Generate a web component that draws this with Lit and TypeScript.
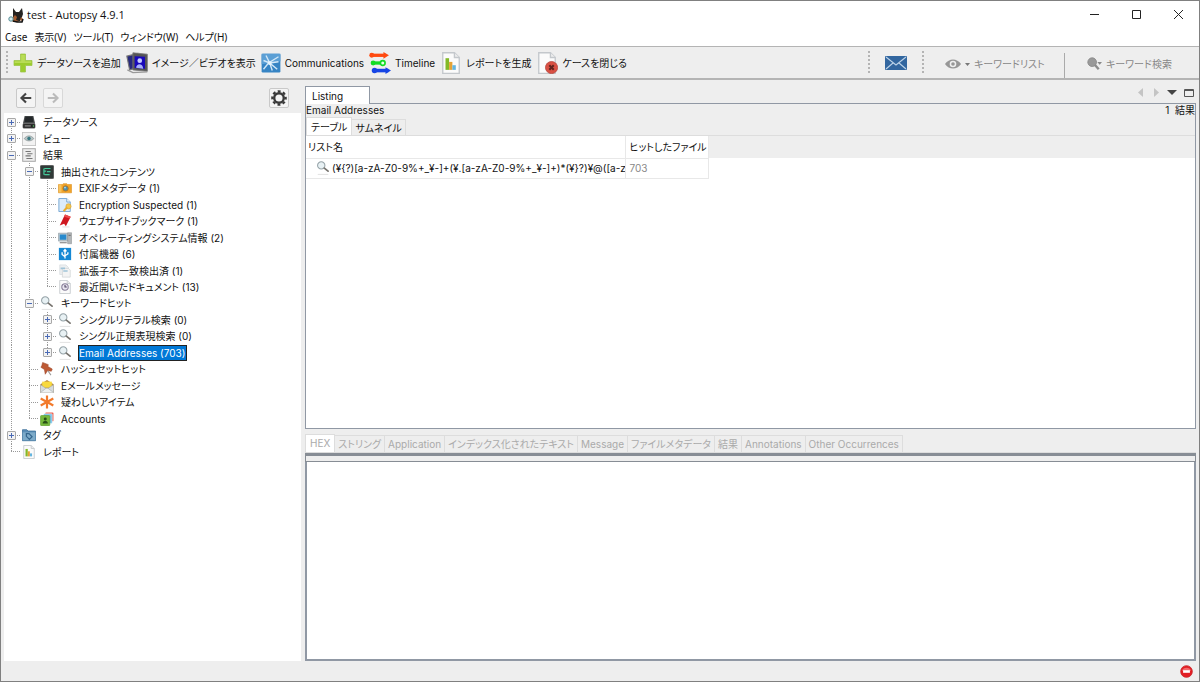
import { LitElement, html, svg, css, nothing } from "lit";
import { customElement, state } from "lit/decorators.js";
import { classMap } from "lit/directives/class-map.js";

const doc = svg`<path d="M2 .5h8.500l3.500 3.500v11.500h-12z" fill="#fbfbfb" stroke="#c4c8cc"/><path d="M10.500 .5v3.500h3.500" fill="#eee" stroke="#c4c8cc"/>`;

const lens = svg`<circle cx="6" cy="5" r="4.200" fill="#e8f1f4" stroke="#96a3a8" stroke-width="1.200"/><path d="M9.500 8.200l4.300 3.400" stroke="#77746f" stroke-width="2" stroke-linecap="round"/><path d="M2 15.300h12" stroke="#ddd"/>`;

const icons: Record<string, unknown> = {
  dog: svg`<path d="M5 1l3 4h3l3-4 1 6-1 3-2 4H7L5 10z" fill="#252321"/><path d="M7 8l2 2-1 3 3 1-1 1H5l-2-2zM13 10l2 2-1 2-2-1z" fill="#a65d31"/><circle cx="3" cy="12" r="2.2" fill="#d7ecee" stroke="#528b95"/><path d="M5 14l4 1h5l1-3" stroke="#111" stroke-width="1.5" fill="none"/>`,
  plus: svg`<path d="M6 .8h4V6h5.2v4H10v5.2H6V10H.8V6H6z" fill="#9ccc2d" stroke="#9cc44a" stroke-width=".6"/><path d="M6.5 1.3h3v5.2h5.2v1.5H1.3V6.5h5.2z" fill="#b9dc56"/>`,
  images: svg`<path d="M.6 3l8-2 1 10-7 2z" fill="#27297c" stroke="#777" stroke-width=".8"/><path d="M5 .6l10.500 1v12.400l-10.500-1z" fill="#555" stroke="#777" stroke-width=".6"/><path d="M6.300 3l7.500.5v8.700l-7.500-.5z" fill="#1808bb"/><circle cx="10" cy="6.3" r="1.7" fill="#c6cbff"/><path d="M7.3 11.500c.3-3.500 5-3.500 5.200.6z" fill="#a8b1fa"/><path d="M1 13l4 2 10.500-.5" stroke="#999" fill="none"/>`,
  comms: svg`<rect x=".5" y=".5" width="15" height="15" rx="1" fill="#3684c4"/><path d="M.5.5h15v6L.5 9z" fill="#5b9fd5"/><path d="M2 13l4-5 8-5M4 2l3 6 6 5M2 6l5 2 7-1M7 8l2 6" stroke="#d3e8f8" stroke-width="1.1" fill="none"/><circle cx="7" cy="8" r="1.5" fill="#e6f3fc"/>`,
  timeline: svg`<path d="M2 2.4h10" stroke-width="2.400" stroke="#ff4a10"/><circle cx="2" cy="2.4" r="1.8" fill="#ff4a10"/><path d="M10.500 0l4 2.400-4 2.500z" fill="#ff4a10"/><path d="M3 8h8" stroke="#14dc24" stroke-width="2.4"/><circle cx="3" cy="8" r="1.8" fill="#14dc24"/><circle cx="10" cy="8" r="1.7" fill="#eaffea" stroke="#14dc24" stroke-width="1.2"/><path d="M3 13.5h11" stroke="#1745e5" stroke-width="2.6"/><circle cx="4" cy="13.5" r="2" fill="#1745e5"/><path d="M12 11l4 2.5-4 2.5z" fill="#1745e5"/>`,
  report: svg`${doc}<path d="M4 4.5h2.6V13H4z" fill="#83b928"/><path d="M6.6 7.2H9V13H6.6z" fill="#e5a336"/><path d="M9 9.6h2.5V13H9z" fill="#64b5df"/>`,
  close: svg`${doc}<circle cx="11.3" cy="11.3" r="4.4" fill="#d95043" stroke="#b9483f" stroke-width=".6"/><path d="M9.7 9.7l3.2 3.2m0-3.2l-3.2 3.2" stroke="#61221d" stroke-width="1.5"/>`,
  mail: svg`<rect width="22" height="14" rx="1" fill="#32669f"/><path d="M1 1l10 8L21 1M1 13l7-6M21 13l-7-6" fill="none" stroke="#bdd3e8" stroke-width="1.1"/>`,
  eye: svg`<path d="M0 5C4-1 12-1 16 5 12 11 4 11 0 5z" fill="#969696"/><circle cx="8" cy="5" r="3.3" fill="#eee"/><circle cx="8" cy="5" r="1.8" fill="#969696"/>`,
  search: svg`<circle cx="5.5" cy="5.5" r="4.6" fill="#999" stroke="#8c8c8c"/><path d="M8.5 8.5l4 4.5" stroke="#8c8c8c" stroke-width="2.6"/><path d="M11 5.2h5l-2.500 3z" fill="#888"/>`,
  back: svg`<path d="M14 8H3M8 2.8L2.8 8 8 13.2" fill="none" stroke="currentColor" stroke-width="2.400"/>`,
  forward: svg`<path d="M2 8h11M8 2.8L13.2 8 8 13.2" fill="none" stroke="currentColor" stroke-width="2.400"/>`,
  gear: svg`<circle cx="8" cy="8" r="4.8" fill="none" stroke="#3a3a3a" stroke-width="2.4"/><circle cx="8" cy="8" r="6.7" fill="none" stroke="#3a3a3a" stroke-width="2.2" stroke-dasharray="2.9 2.36" stroke-dashoffset="1.45"/>`,
  disk: svg`<path d="M3 1h10l2 9H1z" fill="#46494a"/><path d="M4 2h8l1 6H3z" fill="#24282a"/><rect x="1" y="10" width="14" height="5" rx="1" fill="#222" stroke="#777" stroke-width=".6"/><path d="M3 12.5h7" stroke="#bbb"/><circle cx="13" cy="12.5" r=".8" fill="#5fd96a"/>`,
  view: svg`<rect x=".5" y=".5" width="15" height="15" fill="#f2f2f2" stroke="#c4c4c4"/><path d="M2.5 7.5c3-4 8-4 11 0-3 3.5-8 3.5-11 0z" fill="#b8c4c5" stroke="#7c8a8b" stroke-width=".8"/><circle cx="8" cy="7.3" r="2" fill="#397a83"/>`,
  results: svg`<rect x=".8" y=".8" width="14.4" height="14.4" fill="#eee" stroke="#aaa" stroke-width="1.2"/><path d="M4 4h6M6 6.500h6M4 9h6M5 12h7" stroke="#777" stroke-width="1.200"/>`,
  extracted: svg`<rect x=".5" y=".5" width="15" height="15" rx="1" fill="#303a38" stroke="#555"/><path d="M5 4h7M4 7h3M8 7.5h4M5 11h6M4.5 4v7" stroke="#45c99a" stroke-width="1.4"/>`,
  camera: svg`<path d="M.5 4h4.500l1-1h4l1 1h4.500v9.500H.5z" fill="#f1a329" stroke="#d98b17" stroke-width=".6"/><path d="M1 4h3v9H1z" fill="#f6c35e"/><circle cx="8.7" cy="8.500" r="3" fill="#4d8eae" stroke="#b97416"/><circle cx="8" cy="7.5" r="1" fill="#bae1ec"/>`,
  encrypt: svg`<path d="M1 .6h9l4 4v10.900H1z" fill="#dcecfb" stroke="#6da0d0"/><path d="M10 .6v4h4" fill="#f6fbff" stroke="#6da0d0"/><circle cx="12" cy="9.500" r="3" fill="#f5c84d" stroke="#cf982a" stroke-width=".6"/><path d="M10.500 10.500L6.500 15" stroke="#e8ad30" stroke-width="2.400"/>`,
  bookmark: svg`<path d="M8 .5l6.500 2.500-5.500 11-2-3-5 2z" fill="#cf1720"/><path d="M8 .5l6.500 2.500-1 2-6.500-2z" fill="#ee4c4c"/><path d="M5 14.8h8" stroke="#ddd"/>`,
  computer: svg`<path d="M.5 2.500h10.500v9H.5z" fill="#bfc9cf" stroke="#8a989f" stroke-width=".7"/><path d="M2 4h7.500v6H2z" fill="#288acd"/><path d="M11 2h4.500v12.500H11z" fill="#b2b6b8" stroke="#868b8e" stroke-width=".6"/><path d="M2 13.500h8M12 5h2.500" stroke="#777" stroke-width="1.200"/>`,
  usb: svg`<rect x="1" y="1" width="14" height="14" fill="#1588d4"/><path d="M8 13V3M6.3 5L8 3l1.7 2M8 11L4.7 8.5V6M8 10l3.3-2V6" stroke="#fff" stroke-width="1.5" fill="none"/>`,
  mismatch: svg`<path d="M2 1h7l3 3v8H2z" fill="#eceff1" stroke="#d1d6d9" stroke-width=".7"/><path d="M5 5h7l2 2v8H5z" fill="#f4f4f4" stroke="#c8cdd0" stroke-width=".7"/><path d="M3 5h5M6 8h5" stroke="#9fc3d8" stroke-width="1.800"/>`,
  recent: svg`${doc}<circle cx="8" cy="8" r="3.7" fill="#e7e4ee" stroke="#8a819b" stroke-width="1.2"/><path d="M8 5.8V8h2" stroke="#4b4060" fill="none" stroke-width="1.2"/>`,
  lens,
  pin: svg`<path d="M3 .5l6.500 2.500-.5 2L14 8l-1 2.500-4.500-.5-2.500 4L5 8.500 1 6l1-1.600z" fill="#bd5a35" stroke="#9b4426" stroke-width=".6"/><path d="M9 10l3.500 5" stroke="#999" stroke-width="1.200"/>`,
  envelope: svg`<path d="M.5 6l7.500-5 7.500 5v9.500H.5z" fill="#b98b42"/><path d="M2.500 3h11v7h-11z" fill="#f8d93e"/><path d="M.5 6.500l7.500 5 7.500-5v9H.5z" fill="#d7dbdd" stroke="#9da3a5" stroke-width=".6"/><path d="M.5 15.500l6.500-5h2l6.500 5" fill="#edf0f0" stroke="#9da3a5" stroke-width=".6"/>`,
  asterisk: svg`<path d="M8 .5v15M.8 4l14.400 8M15.200 4L.8 12" stroke="#f27a2c" stroke-width="2.500"/>`,
  accounts: svg`<rect x="6" y=".6" width="9.4" height="10" rx="1" fill="#ee6352"/><rect x="4" y="2" width="10" height="11" rx="1" fill="#7bc5ee" stroke="#fff" stroke-width=".5"/><rect x=".6" y="4" width="10.6" height="11.6" rx="1" fill="#75b83c" stroke="#5c9b2b" stroke-width=".7"/><circle cx="6" cy="8" r="1.7" fill="#294f17"/><path d="M3 13c.2-4 5.8-4 6 0z" fill="#294f17"/>`,
  tag: svg`<path d="M.5 14.500V2h5l1.500 1.500h8.500v11z" fill="#5a8db5" stroke="#40739b"/><path d="M.8 5h14.400v9H.8z" fill="#7dabc9"/><path d="M5 6.500h3l3.500 3.500-3 3L5 9.500z" fill="none" stroke="#35678e" stroke-width="1.400"/>`,
  stop: svg`<circle cx="8" cy="8" r="7.2" fill="#e31e24" stroke="#c9272b"/><path d="M2.4 7a5.8 5 0 0 1 11.2 0z" fill="#f2686a"/><path d="M3.8 6.4h8.4v3.2H3.8z" fill="#fff"/>`,
};

const icon = (name: string, w = 16, h = 16, box = "0 0 16 16") =>
  html`<svg width=${w} height=${h} viewBox=${box} aria-hidden="true">${icons[name]}</svg>`;

/** guides: "|" passes through, "+" branches, "L" ends. */
interface Node { guides: string; icon: string; text: string; toggle?: "open" | "closed"; }

const nodes: Node[] = [
  { guides: "+", icon: "disk", text: "データソース", toggle: "closed" },
  { guides: "+", icon: "view", text: "ビュー", toggle: "closed" },
  { guides: "+", icon: "results", text: "結果", toggle: "open" },
  { guides: "|+", icon: "extracted", text: "抽出されたコンテンツ", toggle: "open" },
  { guides: "||+", icon: "camera", text: "EXIFメタデータ (1)" },
  { guides: "||+", icon: "encrypt", text: "Encryption Suspected (1)" },
  { guides: "||+", icon: "bookmark", text: "ウェブサイトブックマーク (1)" },
  { guides: "||+", icon: "computer", text: "オペレーティングシステム情報 (2)" },
  { guides: "||+", icon: "usb", text: "付属機器 (6)" },
  { guides: "||+", icon: "mismatch", text: "拡張子不一致検出済 (1)" },
  { guides: "||L", icon: "recent", text: "最近開いたドキュメント (13)" },
  { guides: "|+", icon: "lens", text: "キーワードヒット", toggle: "open" },
  { guides: "||+", icon: "lens", text: "シングルリテラル検索 (0)", toggle: "closed" },
  { guides: "||+", icon: "lens", text: "シングル正規表現検索 (0)", toggle: "closed" },
  { guides: "||L", icon: "lens", text: "Email Addresses (703)", toggle: "closed" },
  { guides: "|+", icon: "pin", text: "ハッシュセットヒット" },
  { guides: "|+", icon: "envelope", text: "Eメールメッセージ" },
  { guides: "|+", icon: "asterisk", text: "疑わしいアイテム" },
  { guides: "|L", icon: "accounts", text: "Accounts" },
  { guides: "+", icon: "tag", text: "タグ", toggle: "closed" },
  { guides: "L", icon: "report", text: "レポート" },
];

const base = css`
  * { box-sizing: border-box; }
  button { font: inherit; color: inherit; background: none; border: 0; margin: 0; padding: 0; white-space: nowrap; font-feature-settings: inherit; }
  svg { display: block; flex: none; }
`;

@customElement("result-tree")
class ResultTree extends LitElement {
  @state() selected = "Email Addresses (703)";
  static styles = [base, css`
    :host { display: block; background: #fff; overflow: hidden; padding-top: 1px; }
    .tree { display: grid; grid-auto-rows: 1fr; height: 346px; margin: 0; padding: 0; list-style: none; }
    .row { display: flex; align-items: center; min-height: 0; }
    .guide { width: 18px; flex: none; align-self: stretch; display: flex; align-items: center; padding-left: 3px;
      --v: repeating-linear-gradient(#999 0 1px, transparent 1px 2px);
      --h: repeating-linear-gradient(90deg, #999 0 1px, transparent 1px 2px); background-repeat: no-repeat; }
    .pass { background-image: var(--v); background-size: 1px 100%; background-position: 7px 0; }
    .branch { background-image: var(--v), var(--h); background-size: 1px 100%, 10px 1px; background-position: 7px 0, 7px 50%; }
    .row:first-child .branch { background-size: 1px 50%, 10px 1px; background-position: 7px 100%, 7px 50%; }
    .end { background-image: var(--v), var(--h); background-size: 1px 50%, 10px 1px; background-position: 7px 0, 7px 50%; }
    .toggle { width: 9px; height: 9px; border: 1px solid #a8a8a8; border-radius: 1px; display: grid; place-items: center;
      background: linear-gradient(#4a6ab5, #4a6ab5) center / 5px 1px no-repeat, #f3f3f3; }
    .closed { background: linear-gradient(#4a6ab5, #4a6ab5) center / 5px 1px no-repeat, linear-gradient(#4a6ab5, #4a6ab5) center / 1px 5px no-repeat, #f3f3f3; }
    .icon { width: 14px; margin-right: 6px; flex: none; }
    .name { padding: 0 1px; height: 16px; line-height: 16px; }
    .on { background: #0078d7; color: #fff; outline: 1px solid #222; outline-offset: -1px; padding-right: 2px; }
  `];
  render() {
    return html`<ul class="tree" role="tree" aria-label="結果">${nodes.map((n) => html`
      <li class="row" role="treeitem" aria-selected=${n.text === this.selected}>
        ${[...n.guides].map((g, i) => html`<span class="guide ${g === "|" ? "pass" : g === "+" ? "branch" : "end"}">${
          n.toggle && i === n.guides.length - 1
            ? html`<button class="toggle ${n.toggle}" aria-label=${n.text}></button>` : nothing}</span>`)}
        <span class="icon">${icon(n.icon, 14, 14)}</span>
        <button class=${classMap({ name: true, on: n.text === this.selected })} @click=${() => (this.selected = n.text)}>${n.text}</button>
      </li>`)}</ul>`;
  }
}

@customElement("app-root")
class AppRoot extends LitElement {
  static styles = [base, css`
    :host { display: flex; flex-direction: column; height: 100vh; box-sizing: border-box; border: 1px solid #808080; overflow: hidden;
      background: #eee; color: #111; font: 10px/16px Inter, "Noto Sans CJK JP", sans-serif; font-feature-settings: "palt"; }
    .title { display: flex; align-items: center; height: 27px; background: #fff; padding-left: 7px; }
    .title h1 { flex: 1; margin: 0 0 0 3px; font: 11px/16px "Open Sans", sans-serif; }
    .win { width: 42px; display: grid; place-items: center; }
    .menu { display: flex; gap: 7px; height: 18px; background: #fff; padding-left: 4px;
      font-family: "Noto Sans", "Noto Sans CJK JP", sans-serif; }
    .toolbar { display: flex; align-items: center; height: 34px; border: solid #b4b4b4; border-width: 1px 0 2px; padding-left: 5px; }
    .grip { width: 2px; height: 24px; background: repeating-linear-gradient(#b4b4b4 0 2px, transparent 2px 4px); }
    .tool { display: flex; align-items: center; gap: 4px; margin-left: 5px; }
    .spring { flex: 1; }
    .post { margin: 0 15px; }
    .dim { display: flex; align-items: center; gap: 4px; color: #888; padding-top: 3px; }
    .lists { margin-left: 21px; width: 119px; }
    .find { margin-left: 22px; width: 112px; }
    .bar { width: 1px; height: 25px; background: #aaa; align-self: flex-end; }
    .main { flex: 1; display: flex; min-height: 0; padding: 0 3px 0 3px; }
    .side { width: 297px; flex: none; display: flex; flex-direction: column; margin-right: 4px; }
    .nav { display: flex; align-items: center; gap: 7px; height: 33px; padding: 2px 12px 0 12px; }
    .sq { width: 20px; height: 20px; display: grid; place-items: center; border: 1px solid #c9c9c9; border-radius: 2px; background: #f4f4f4; color: #444; }
    .sq:disabled { color: #bbb; border-color: #d8d8d8; }
    result-tree { flex: 1; }
    .work { flex: 1; min-width: 0; display: flex; flex-direction: column; }
    .strip { display: flex; align-items: flex-end; height: 24px; }
    .doctab { width: 65px; height: 18px; background: #fff; border: 1px solid #9098a4; border-bottom: 0; text-align: left; padding-left: 6px; }
    .rule { flex: 1; align-self: stretch; border-bottom: 1px solid #9098a4; display: flex; justify-content: flex-end; align-items: center; padding: 2px 2px 0 0; gap: 7px; }
    .view { flex: 325; min-height: 0; display: flex; flex-direction: column; border: 1px solid #9098a4; border-top: 0; background: #fff; }
    .path { display: flex; justify-content: space-between; height: 13px; line-height: 13px; background: #eee; }
    .tabs { display: flex; align-items: flex-end; background: #eee; border-bottom: 1px solid #ddd; }
    .tab { height: 16px; line-height: 14px; border: 1px solid #ddd; border-bottom: 0; border-left-width: 0; padding: 0 3px; background: #eee; }
    .tab.on { height: 18px; background: #fff; border-left-width: 1px; padding: 0 4px; }
    table { border-collapse: collapse; table-layout: fixed; width: 100%; background: #fff; }
    th, td { padding: 0 4px; text-align: left; font-weight: 400; border: 0 solid #e8e8e8; border-width: 0 1px 1px 0; overflow: hidden; white-space: nowrap; }
    th { height: 22px; padding: 0 0 0 2px; }
    td { height: 20px; color: #888; }
    th + th { padding-left: 4px; }
    .c1 { width: 319px; }
    .c2 { width: 83px; }
    td.hit { color: #111; padding: 0 0 0 10px; }
    .hit div { display: flex; gap: 2px; align-items: center; overflow: hidden; }
    th.rest { background: #eee; border: 0; }
    td.rest { border: 0; }
    .lower { flex: 228; min-height: 0; display: flex; flex-direction: column; padding-top: 5px; }
    .lower .tabs { color: #aaa; }
    .lower .tab { height: 17px; line-height: 16px; }
    .lower .tab.on { height: 18px; line-height: 14px; }
    .split { height: 9px; border: solid #878d95; border-width: 3px 1px 1px; flex: none; }
    .pane { flex: 1; background: #fff; border: solid #9098a4; border-width: 0 2px 2px; }
    .status { height: 20px; display: flex; justify-content: flex-end; align-items: center; padding-right: 6px; }
  `];

  tool(name: string, label: string, size = 20) {
    return html`<button class="tool">${icon(name, size, size)}${label}</button>`;
  }

  render() {
    return html`
      <header class="title">
        ${icon("dog", 16, 16)}<h1>test - Autopsy 4.9.1</h1>
        <button class="win" aria-label="最小化"><svg width="11" height="11"><path d="M1 5.5h9" stroke="#222"/></svg></button>
        <button class="win" aria-label="最大化"><svg width="11" height="11"><path d="M1.5 1.5h8v8h-8z" fill="none" stroke="#222"/></svg></button>
        <button class="win" aria-label="終了"><svg width="11" height="11"><path d="M1 1l9 9M10 1l-9 9" stroke="#222"/></svg></button>
      </header>
      <nav class="menu">${["Case", "表示(V)", "ツール(T)", "ウィンドウ(W)", "ヘルプ(H)"].map((m) => html`<button>${m}</button>`)}</nav>
      <div class="toolbar">
        <span class="grip"></span>
        ${this.tool("plus", "データソースを追加")}${this.tool("images", "イメージ／ビデオを表示", 22)}
        ${this.tool("comms", "Communications")}${this.tool("timeline", "Timeline", 22)}
        ${this.tool("report", "レポートを生成", 22)}${this.tool("close", "ケースを閉じる", 22)}
        <span class="spring"></span>
        <span class="grip"></span>
        <button class="post" aria-label="Email">${icon("mail", 22, 14, "0 0 22 14")}</button>
        <span class="grip"></span>
        <button class="dim lists">${icon("eye", 16, 10, "0 0 16 10")}<svg width="5" height="3"><path d="M0 0h5L2.5 3z" fill="#777"/></svg>キーワードリスト</button>
        <span class="bar"></span>
        <button class="dim find">${icon("search", 15, 15)}キーワード検索</button>
      </div>
      <div class="main">
        <aside class="side">
          <div class="nav">
            <button class="sq" aria-label="戻る">${icon("back", 14, 14)}</button>
            <button class="sq" aria-label="進む" disabled>${icon("forward", 14, 14)}</button>
            <span class="spring"></span>
            <button class="sq" aria-label="設定">${icon("gear", 16, 16)}</button>
          </div>
          <result-tree></result-tree>
        </aside>
        <main class="work">
          <div class="strip">
            <button class="doctab">Listing</button>
            <div class="rule">
              <button aria-label="前へ"><svg width="8" height="9"><path d="M6 0v9L1 4.500z" fill="#c4c4c4"/></svg></button>
              <button aria-label="次へ"><svg width="8" height="9"><path d="M2 0v9l5-4.500z" fill="#c4c4c4"/></svg></button>
              <button aria-label="一覧"><svg width="10" height="6"><path d="M0 0h10L5 5z" fill="#444"/></svg></button>
              <button aria-label="拡大"><svg width="10" height="8"><path d="M.5 .5h9v7h-9zM.5 1.500h9" fill="none" stroke="#555"/></svg></button>
            </div>
          </div>
          <section class="view">
            <div class="path"><span>Email Addresses</span><span>1 &nbsp;結果</span></div>
            <div class="tabs"><button class="tab on">テーブル</button><button class="tab">サムネイル</button></div>
            <table>
              <colgroup><col class="c1"><col class="c2"><col></colgroup>
              <thead><tr><th>リスト名</th><th>ヒットしたファイル</th><th class="rest"></th></tr></thead>
              <tbody><tr>
                <td class="hit"><div>${icon("lens", 14, 14)}<span>(¥{?)[a-zA-Z0-9%+_¥-]+(¥.[a-zA-Z0-9%+_¥-]+)*(¥}?)¥@([a-zA-Z</span></div></td>
                <td>703</td><td class="rest"></td>
              </tr></tbody>
            </table>
          </section>
          <section class="lower">
            <div class="tabs">${["HEX", "ストリング", "Application", "インデックス化されたテキスト", "Message", "ファイルメタデータ", "結果", "Annotations", "Other Occurrences"].map(
              (t, i) => html`<button class=${classMap({ tab: true, on: i === 0 })}>${t}</button>`)}</div>
            <div class="split"></div>
            <div class="pane"></div>
          </section>
        </main>
      </div>
      <footer class="status">${icon("stop", 13, 13)}</footer>
    `;
  }
}
